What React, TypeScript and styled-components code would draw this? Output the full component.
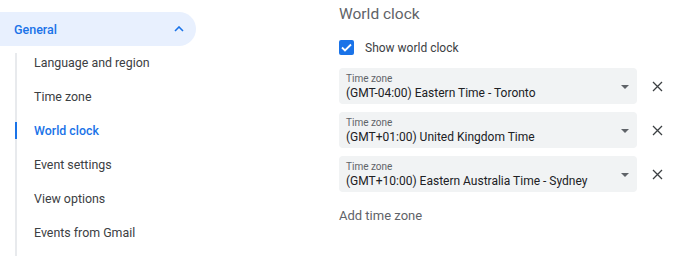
import React from 'react';
import styled, { createGlobalStyle } from 'styled-components';

const GlobalStyle = createGlobalStyle`
  html, body {
    margin: 0;
    padding: 0;
    background: #fff;
    font-family: Roboto, 'Liberation Sans', sans-serif;
    color: #3c4043;
  }
`;

const Page = styled.div`
  display: flex;
  width: 700px;
  height: 256px;
  overflow: hidden;
`;

const Sidebar = styled.nav`
  width: 196px;
  padding-top: 12px;
  flex-shrink: 0;
`;

const SectionHeader = styled.div`
  display: flex;
  align-items: center;
  justify-content: space-between;
  height: 34px;
  padding: 0 12px 0 14px;
  background: #e8f0fe;
  border-radius: 0 17px 17px 0;
  color: #1a73e8;
  font-size: 12.5px;
  font-weight: 500;
`;

const SubList = styled.ul`
  position: relative;
  list-style: none;
  margin: 0 0 0 15px;
  padding: 0;

  &::before {
    content: '';
    position: absolute;
    left: 0;
    top: 7px;
    bottom: -40px;
    width: 2px;
    background: #e8eaed;
  }
`;

const SubItem = styled.li<{ $active?: boolean }>`
  position: relative;
  height: 34px;
  line-height: 34px;
  padding-left: 19px;
  font-size: 12.4px;
  color: ${(p) => (p.$active ? '#1a73e8' : '#3c4043')};
  font-weight: ${(p) => (p.$active ? 500 : 400)};

  &::before {
    content: '';
    display: ${(p) => (p.$active ? 'block' : 'none')};
    position: absolute;
    left: 0;
    top: 8px;
    width: 2px;
    height: 17px;
    background: #1a73e8;
  }
`;

const Main = styled.main`
  margin-left: 143px;
  width: 340px;
`;

const Title = styled.h2`
  margin: 3px 0 0;
  font-size: 15.5px;
  font-weight: 400;
  color: #5f6368;
  line-height: 22px;
`;

const CheckRow = styled.label`
  display: flex;
  align-items: center;
  gap: 11px;
  margin-top: 15px;
  font-size: 12px;
  color: #3c4043;
`;

const Box = styled.span`
  width: 15px;
  height: 15px;
  border-radius: 2px;
  background: #1a73e8;
  display: flex;
  align-items: center;
  justify-content: center;
`;

const ZoneList = styled.div`
  display: flex;
  flex-direction: column;
  gap: 8px;
  margin-top: 13px;
`;

const ZoneRow = styled.div`
  display: flex;
  align-items: center;
`;

const Field = styled.div`
  width: 298px;
  height: 36px;
  box-sizing: border-box;
  background: #f1f3f4;
  border-radius: 4px;
  padding: 1px 0 0 7px;
  display: flex;
  align-items: center;
`;

const FieldText = styled.div`
  flex: 1;
`;

const FieldLabel = styled.div`
  font-size: 10px;
  line-height: 13px;
  color: #5f6368;
`;

const FieldValue = styled.div`
  font-size: 12px;
  line-height: 16px;
  color: #202124;
`;

const Caret = styled.span`
  width: 0;
  height: 0;
  border-left: 4px solid transparent;
  border-right: 4px solid transparent;
  border-top: 4px solid #5f6368;
  margin: 0 8px 0 0;
`;

const CloseButton = styled.button`
  border: 0;
  background: none;
  padding: 0;
  margin-left: 14px;
  width: 12px;
  height: 12px;
  display: flex;
  align-items: center;
  justify-content: center;
`;

const AddLink = styled.div`
  margin-top: 16px;
  font-size: 13px;
  color: #5f6368;
`;

const zones = [
  '(GMT-04:00) Eastern Time - Toronto',
  '(GMT+01:00) United Kingdom Time',
  '(GMT+10:00) Eastern Australia Time - Sydney',
];

const items = ['Language and region', 'Time zone', 'World clock', 'Event settings', 'View options', 'Events from Gmail'];

const App = () => {
  return (
    <Page>
      <GlobalStyle />
      <Sidebar>
        <SectionHeader>
          <span>General</span>
          <svg width="10" height="6" viewBox="0 0 10 6">
            <path d="M1 5l4-4 4 4" stroke="#1a73e8" strokeWidth="1.6" fill="none" />
          </svg>
        </SectionHeader>
        <SubList>
          {items.map((item) => (
            <SubItem key={item} $active={item === 'World clock'}>
              {item}
            </SubItem>
          ))}
        </SubList>
      </Sidebar>
      <Main>
        <Title>World clock</Title>
        <CheckRow>
          <Box>
            <svg width="11" height="9" viewBox="0 0 11 9">
              <path d="M1 4.5l3 3 6-6" stroke="#fff" strokeWidth="1.8" fill="none" />
            </svg>
          </Box>
          Show world clock
        </CheckRow>
        <ZoneList>
          {zones.map((z) => (
            <ZoneRow key={z}>
              <Field>
                <FieldText>
                  <FieldLabel>Time zone</FieldLabel>
                  <FieldValue>{z}</FieldValue>
                </FieldText>
                <Caret />
              </Field>
              <CloseButton>
                <svg width="11" height="11" viewBox="0 0 11 11">
                  <path d="M1 1l9 9M10 1l-9 9" stroke="#3c4043" strokeWidth="1.3" />
                </svg>
              </CloseButton>
            </ZoneRow>
          ))}
        </ZoneList>
        <AddLink>Add time zone</AddLink>
      </Main>
    </Page>
  );
};

export default App;
